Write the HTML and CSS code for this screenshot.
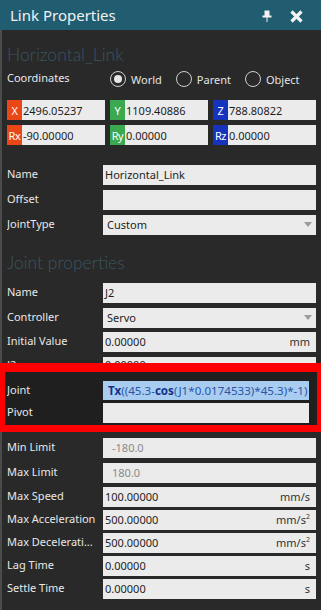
FILE: index.html
```html
<!DOCTYPE html>
<html>
<head>
<meta charset="utf-8">
<link rel="stylesheet" href="styles.css">
</head>
<body>
<div class="panel">
  <div class="titlebar">
    <span class="title">Link Properties</span>
    <div class="tb-icons">
      <svg class="pin" width="10" height="12" viewBox="0 0 10 12"><path d="M2.5 0.5h5v5h2v2h-4v4.5h-1v-4.5h-4v-2h2z" fill="#f2f2f2"/></svg>
      <svg class="close" width="13" height="13" viewBox="0 0 13 13"><path d="M1.5 1.5L11.5 11.5M11.5 1.5L1.5 11.5" stroke="#f2f2f2" stroke-width="3.2" stroke-linecap="butt"/></svg>
    </div>
  </div>
  <div class="content">
    <div class="section section-first">Horizontal_Link</div>
    <div class="coord-head">
      <span class="label">Coordinates</span>
      <div class="radios">
        <span class="radio"><span class="circle checked"></span>World</span>
        <span class="radio"><span class="circle"></span>Parent</span>
        <span class="radio"><span class="circle"></span>Object</span>
      </div>
    </div>
    <div class="coord-grid">
      <div class="coord"><span class="axis ax-x">X</span><span class="cval">2496.05237</span></div>
      <div class="coord"><span class="axis ax-y">Y</span><span class="cval">1109.40886</span></div>
      <div class="coord"><span class="axis ax-z">Z</span><span class="cval">788.80822</span></div>
      <div class="coord"><span class="axis ax-x">Rx</span><span class="cval">-90.00000</span></div>
      <div class="coord"><span class="axis ax-y">Ry</span><span class="cval">0.00000</span></div>
      <div class="coord"><span class="axis ax-z">Rz</span><span class="cval">0.00000</span></div>
    </div>
    <div class="rows rows-link">
      <div class="row"><span class="label">Name</span><div class="field">Horizontal_Link</div></div>
      <div class="row"><span class="label">Offset</span><div class="field"></div></div>
      <div class="row"><span class="label">JointType</span><div class="field select">Custom<span class="caret"></span></div></div>
    </div>
    <div class="section section-joint">Joint properties</div>
    <div class="rows rows-joint">
      <div class="row"><span class="label">Name</span><div class="field">J2</div></div>
      <div class="row"><span class="label">Controller</span><div class="field select">Servo<span class="caret"></span></div></div>
      <div class="row"><span class="label">Initial Value</span><div class="field"><span>0.00000</span><span class="unit">mm</span></div></div>
      <div class="row row-j2"><span class="label">J2</span><div class="field">0.00000</div></div>
    </div>
    <div class="frame">
      <div class="row row-joint"><span class="label">Joint</span><div class="field expr"><b>Tx</b>((45.3-<b>cos</b>(J1*0.0174533)*45.3)*-1)</div></div>
      <div class="row row-pivot"><span class="label">Pivot</span><div class="field"></div></div>
    </div>
    <div class="rows rows-limits">
      <div class="row"><span class="label">Min Limit</span><div class="field disabled">-180.0</div></div>
      <div class="row"><span class="label">Max Limit</span><div class="field disabled">180.0</div></div>
    </div>
    <div class="rows rows-tight">
      <div class="row"><span class="label">Max Speed</span><div class="field"><span>100.00000</span><span class="unit">mm/s</span></div></div>
      <div class="row"><span class="label">Max Acceleration</span><div class="field"><span>500.00000</span><span class="unit">mm/s<sup>2</sup></span></div></div>
      <div class="row"><span class="label">Max Decelerati...</span><div class="field"><span>500.00000</span><span class="unit">mm/s<sup>2</sup></span></div></div>
      <div class="row"><span class="label">Lag Time</span><div class="field"><span>0.00000</span><span class="unit">s</span></div></div>
      <div class="row"><span class="label">Settle Time</span><div class="field"><span>0.00000</span><span class="unit">s</span></div></div>
    </div>
  </div>
</div>
</body>
</html>
```

FILE: styles.css
```css
* { box-sizing: border-box; }
html, body { margin: 0; padding: 0; }
body {
  background: #292929;
  font-family: "Noto Sans", "Open Sans", sans-serif;
  font-size: 11px;
  color: #e4e4e4;
  width: 321px;
  height: 610px;
  overflow: hidden;
}
.panel {
  height: 610px;
  border-left: 2px solid #4b4b4b;
  background: #292929;
}
.titlebar {
  height: 30px;
  margin-left: -2px;
  background: #205d71;
  display: flex;
  align-items: center;
  justify-content: space-between;
  padding: 0 18px 0 10px;
}
.title {
  color: #f2f2f2;
  font-size: 15px;
  line-height: 30px;
}
.tb-icons {
  display: flex;
  align-items: center;
  gap: 18px;
  padding-top: 2px;
}
.content {
  padding: 0 5px;
}
.section {
  color: #385662;
  font-family: "Lato", "Noto Sans", sans-serif;
  font-size: 17.5px;
  font-weight: 300;
  height: 26px;
  line-height: 28px;
}
.section-first { margin-top: 11px; }
.section-joint { margin-top: 14px; }
.coord-head {
  margin-top: 2px;
  height: 20px;
  display: flex;
  align-items: center;
}
.coord-head .label { width: 103px; }
.radios {
  display: flex;
  gap: 14px;
}
.radio {
  display: flex;
  align-items: center;
  gap: 5px;
  font-size: 11px;
}
.circle {
  width: 16px;
  height: 16px;
  border-radius: 50%;
  border: 1.5px solid #cfcfcf;
  display: flex;
  align-items: center;
  justify-content: center;
}
.circle.checked::after {
  content: "";
  width: 8px;
  height: 8px;
  border-radius: 50%;
  background: #e6e6e6;
}
.coord-grid {
  margin-top: 11px;
  display: grid;
  grid-template-columns: 98px 98px 1fr;
  column-gap: 5px;
  row-gap: 5px;
}
.coord {
  height: 20px;
  background: #ebebeb;
  display: flex;
  align-items: center;
  color: #1e1e1e;
  font-size: 11px;
}
.axis {
  width: 15px;
  height: 20px;
  color: #fff;
  display: flex;
  align-items: center;
  justify-content: center;
  font-size: 11px;
  letter-spacing: -0.4px;
}
.ax-x { background: #eb4618; }
.ax-y { background: #3aa94f; }
.ax-z { background: #1533bd; }
.cval { padding-left: 1px; }
.rows {
  display: flex;
  flex-direction: column;
  gap: 5px;
}
.rows-link { margin-top: 20px; }
.rows-joint { margin-top: 8px; gap: 4.7px; }
.rows-limits { margin-top: 6px; }
.rows-tight { margin-top: 4px; gap: 3px; }
.row {
  height: 20px;
  display: grid;
  grid-template-columns: 96px 1fr;
  align-items: center;
}
.label {
  font-size: 11px;
  color: #e8e8e8;
  white-space: nowrap;
  overflow: hidden;
  line-height: 18px;
  padding-bottom: 2px;
}
.field {
  height: 100%;
  background: #ebebeb;
  color: #1e1e1e;
  font-size: 11px;
  display: flex;
  align-items: center;
  justify-content: space-between;
  padding: 0 6px 1px 2px;
  position: relative;
}
.field sup {
  font-size: 7px;
  vertical-align: 5px;
  line-height: 0;
}
.unit { color: #333; }
.select { padding-left: 4px; }
.caret {
  width: 0;
  height: 0;
  border-left: 4px solid transparent;
  border-right: 4px solid transparent;
  border-top: 5px solid #9c9c9c;
  margin-right: -2px;
}
.disabled {
  color: #8a8a8a;
  padding-left: 9px;
}
.row-j2 .label, .row-j2 .field { padding-bottom: 5px; }
.frame {
  position: relative;
  margin: -14px -5px 0 -7px;
  border-style: solid;
  border-color: #ff0000;
  border-width: 9px 4px 7px 5px;
  background: #1f1f1f;
  padding: 9px 8px 2px 2px;
  display: flex;
  flex-direction: column;
  gap: 3px;
}
.frame .row { height: 19px; }
.frame .row-pivot { height: 20px; }
.expr {
  background: #a8cdf0;
  color: #2b56a6;
  justify-content: flex-start;
  padding-left: 5px;
  white-space: nowrap;
  overflow: hidden;
  font-size: 11.6px;
}
.expr b { color: #13308a; font-weight: 700; }
```
